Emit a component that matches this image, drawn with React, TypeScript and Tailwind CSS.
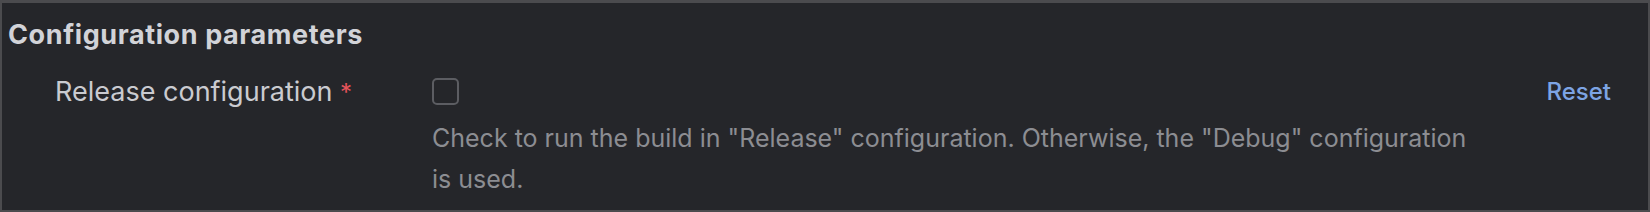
export default function App() {
  return (
    <div
      className="w-[1650px] h-[212px] box-border overflow-hidden border-l-2 border-r-2 border-b-2 border-t-[3px] border-[#4b4b4e] bg-[#25262a]"
      style={{ fontFamily: 'Inter, "Noto Sans", sans-serif' }}
    >
      {/* Section title */}
      <h2 className="pl-[6px] pt-[16px] text-[27px] leading-[32px] font-bold tracking-[0.6px] text-[#d2d3d8]">
        Configuration parameters
      </h2>

      {/* Parameter row */}
      <div className="mt-[25px] flex items-start pr-[37px]">
        <div className="w-[430px] shrink-0 pl-[53px] text-[27px] leading-[32px] text-[#cacbd0]">
          Release configuration <span className="text-[24px] text-[#e5535a]">*</span>
        </div>

        <div className="flex-1 pt-[2px]">
          <div className="h-[27px] w-[27px] rounded-[5px] border-2 border-[#5c5d62]" />
          <p className="mt-[13px] max-w-[1050px] text-[25px] leading-[41px] text-[#8c8d92]">
            Check to run the build in "Release" configuration. Otherwise, the "Debug" configuration is used.
          </p>
        </div>

        <button className="pt-[1px] text-[24px] leading-[29px] font-medium text-[#7da4e4]">
          Reset
        </button>
      </div>
    </div>
  );
}
